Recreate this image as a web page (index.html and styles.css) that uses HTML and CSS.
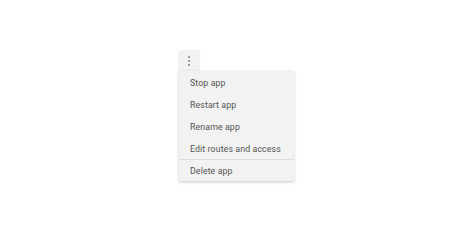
FILE: index.html
```html
<!DOCTYPE html>
<html>
<head>
<meta charset="utf-8">
<link rel="stylesheet" href="styles.css">
</head>
<body>
<div class="wrap">
  <div class="overflow">
    <button class="trigger" aria-label="Options">
      <svg width="4" height="12" viewBox="0 0 4 12"><circle cx="2" cy="2" r="0.8" fill="#333333"/><circle cx="2" cy="6" r="0.8" fill="#333333"/><circle cx="2" cy="10" r="0.8" fill="#333333"/></svg>
    </button>
    <ul class="menu">
      <li class="item">Stop app</li>
      <li class="item">Restart app</li>
      <li class="item">Rename app</li>
      <li class="item">Edit routes and access</li>
      <li class="item divider">Delete app</li>
    </ul>
  </div>
</div>
</body>
</html>
```
FILE: styles.css
```css
html, body { margin: 0; padding: 0; background: #ffffff; }
body { width: 474px; height: 232px; font-family: Roboto, "Liberation Sans", sans-serif; }
.wrap { padding: 51px 0 0 179px; }
.overflow { display: flex; flex-direction: column; align-items: flex-start; }
.trigger {
  width: 20px; height: 20px; padding: 0; margin: 0; border: 0;
  background: #f2f2f2; display: flex; align-items: center; justify-content: center;
  box-shadow: 0 0 2px rgba(0,0,0,0.15);
}
.menu {
  list-style: none; margin: 0; padding: 0; width: 115px;
  background: #f2f2f2; box-shadow: 0 1px 3px rgba(0,0,0,0.22);
}
.item {
  height: 22px; display: flex; align-items: center; padding-left: 11px; padding-top: 1px; box-sizing: border-box;
  font-size: 8.8px; color: #555555; letter-spacing: 0.1px; white-space: nowrap;
}
.divider { border-top: 1px solid #dcdcdc; }
```
